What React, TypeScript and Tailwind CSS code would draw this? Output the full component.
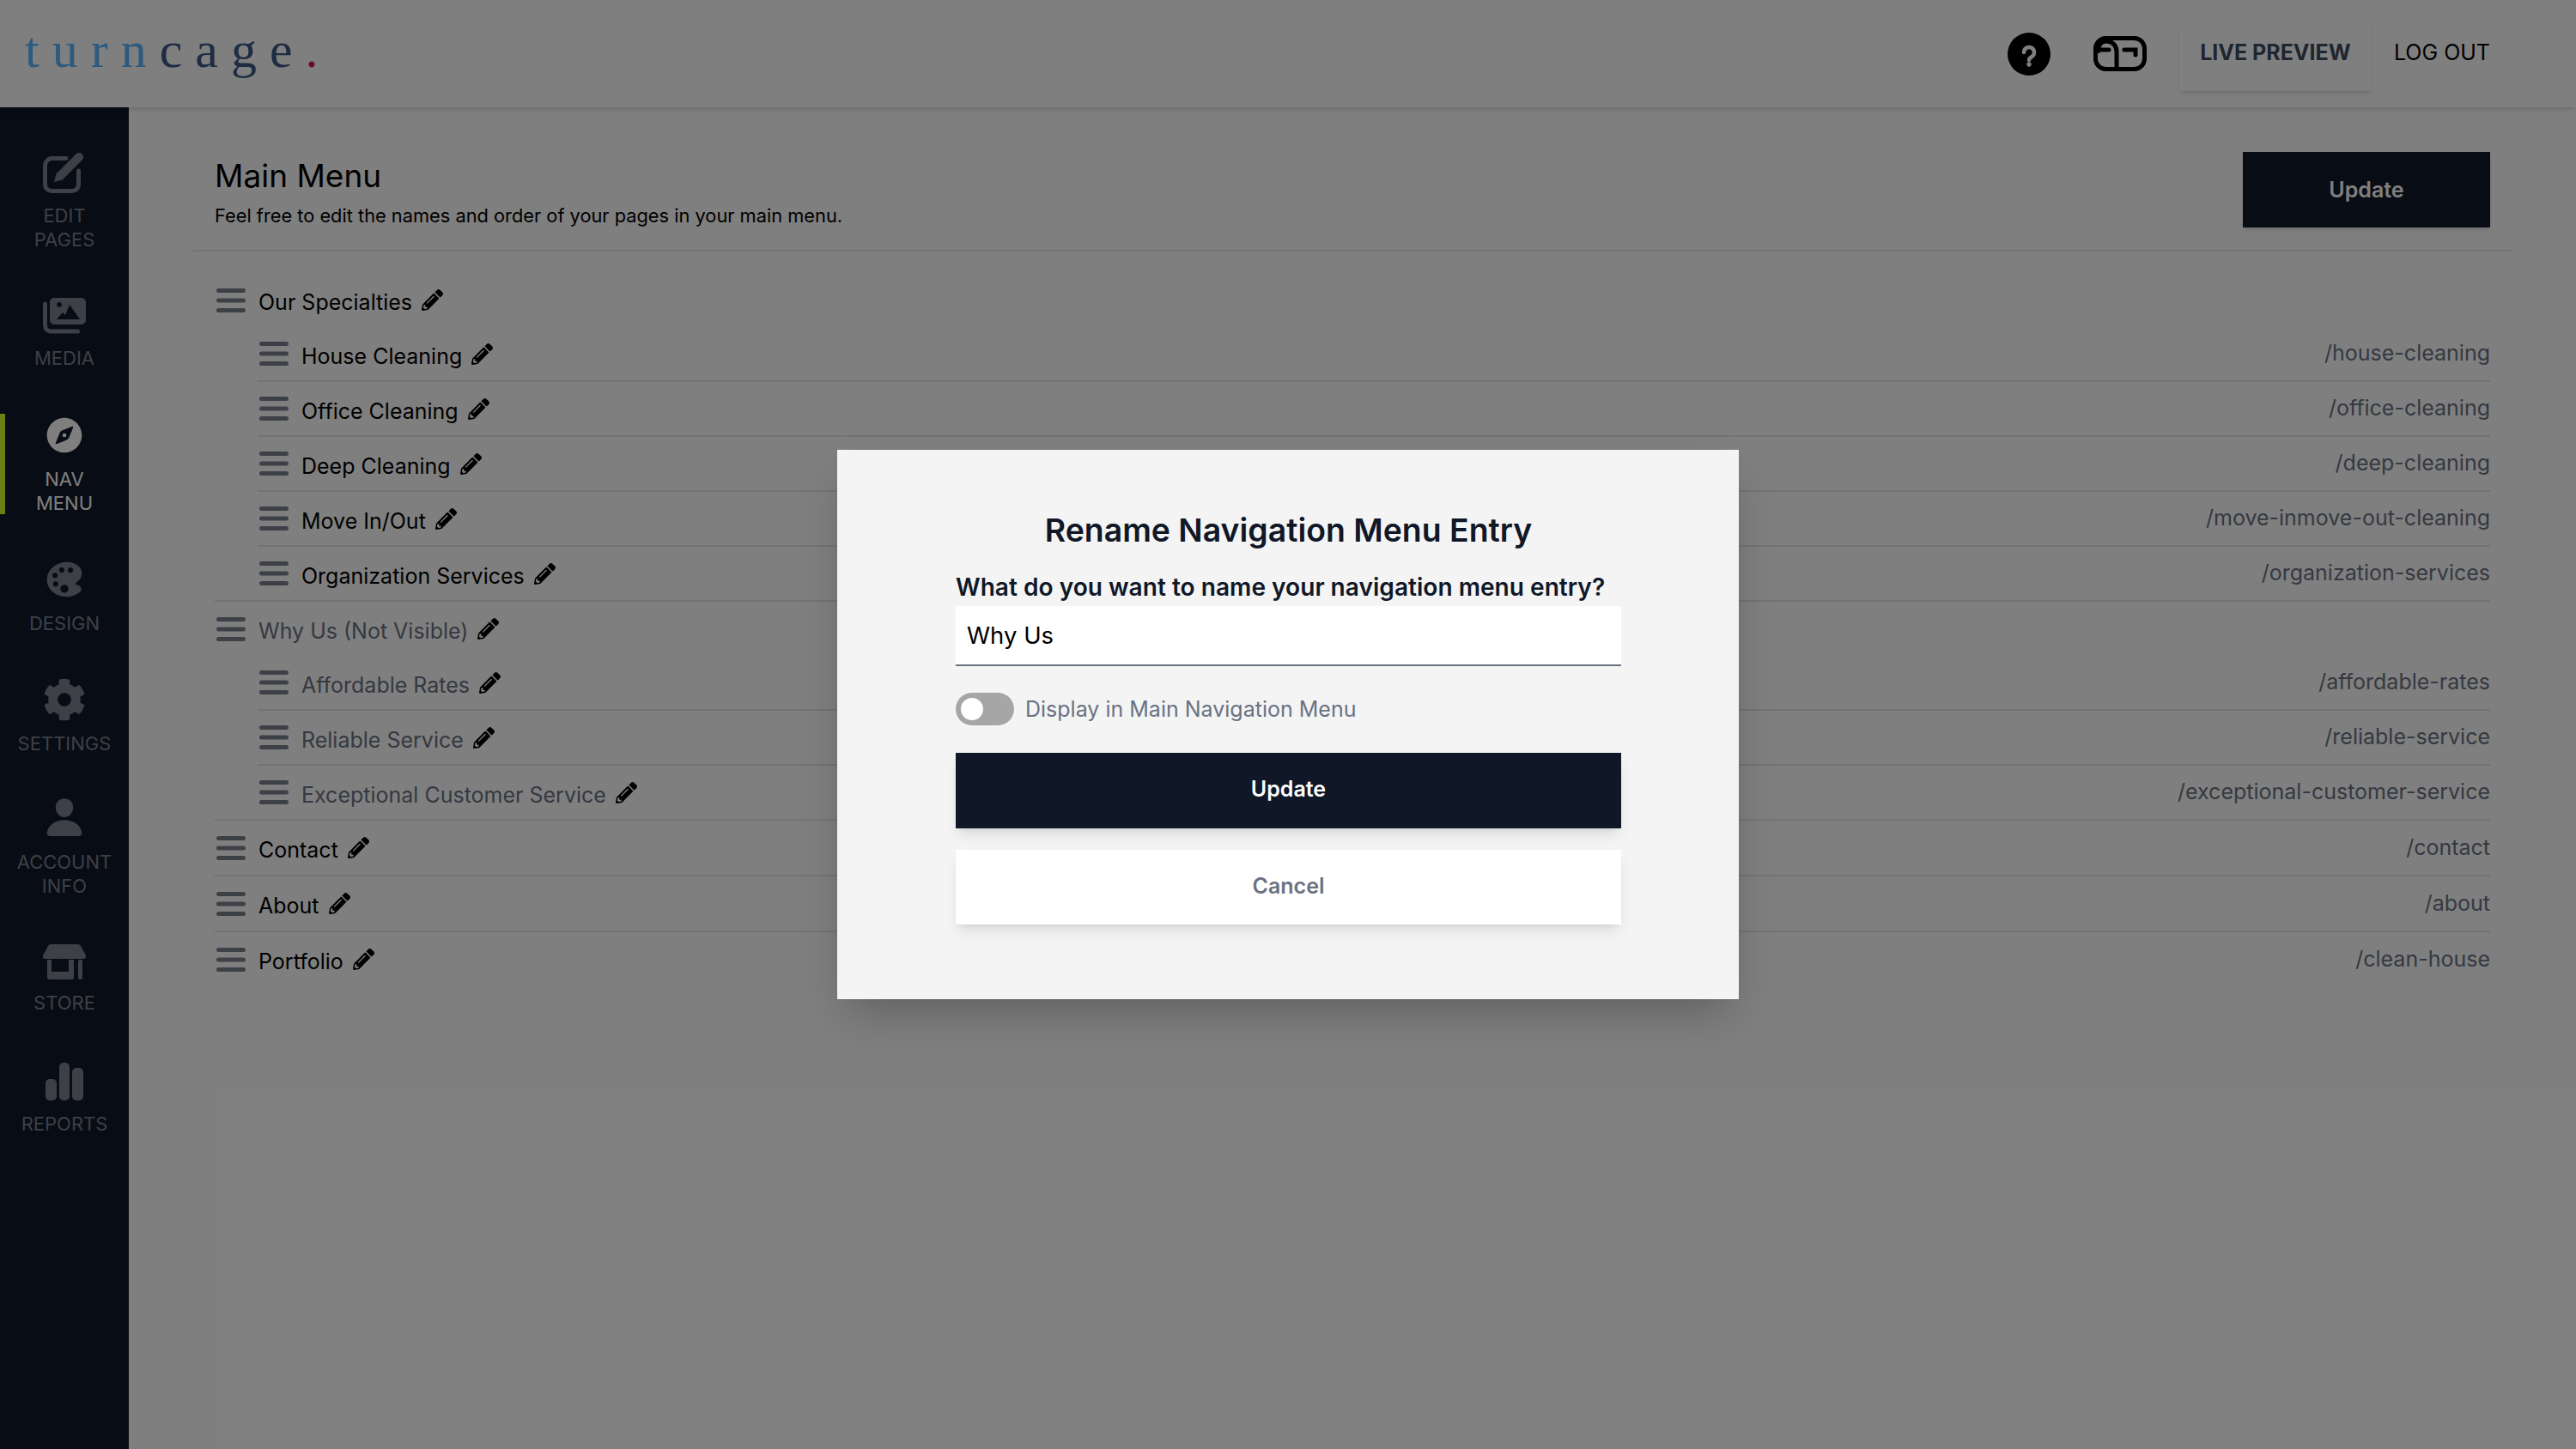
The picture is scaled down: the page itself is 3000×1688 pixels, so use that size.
import type { ReactNode } from "react"
import { FaCog, FaPencilAlt } from "react-icons/fa"
import { IoColorPalette, IoCompass, IoPerson } from "react-icons/io5"

function EditIcon() {
  return (
    <svg width="50" height="50" viewBox="0 0 50 50" fill="none">
      <path d="M27 9.5H11A8.5 8.5 0 0 0 2.5 18v22a7.5 7.5 0 0 0 7.5 7.5h24a7.5 7.5 0 0 0 7.5-7.5V24" stroke="currentColor" strokeWidth="5" strokeLinecap="round" />
      <path d="M21 29L42 8" stroke="currentColor" strokeWidth="10" strokeLinecap="round" />
      <path d="M13 37l3-11 8 8z" fill="currentColor" />
    </svg>
  )
}

function MediaIcon() {
  return (
    <svg width="50" height="50" viewBox="0 0 50 50" fill="none">
      <path d="M2.5 13v25a7 7 0 0 0 7 7h31" stroke="currentColor" strokeWidth="5" strokeLinecap="round" />
      <path
        fillRule="evenodd"
        d="M13 6h32a5 5 0 0 1 5 5v21a5 5 0 0 1-5 5H13a5 5 0 0 1-5-5V11a5 5 0 0 1 5-5zM16 31l7-8 3 3 5-12 12 17zM19 11a3 3 0 1 0 .01 0z"
        fill="currentColor"
      />
    </svg>
  )
}

function StoreIcon() {
  return (
    <svg width="50" height="50" viewBox="0 0 50 50" fill="currentColor">
      <path d="M9 4h32q2 0 3 2l6 11q1 4-3 4H3q-4 0-3-4L6 6q1-2 3-2z" />
      <path d="M5 22h5v14h20V22h6v21q0 2-2 2H7q-2 0-2-2z" />
      <rect x="41" y="22" width="5" height="23" rx="2" />
    </svg>
  )
}

function ReportsIcon() {
  return (
    <svg width="50" height="50" viewBox="0 0 50 50" fill="currentColor">
      <rect x="3" y="21" width="13" height="25" rx="5" />
      <rect x="19" y="2" width="12" height="44" rx="5" />
      <rect x="34" y="8" width="13" height="38" rx="5" />
    </svg>
  )
}

const navItems: { label: string[]; icon: ReactNode; active?: boolean; itemClass?: string; labelClass?: string }[] = [
  { label: ["EDIT", "PAGES"], icon: <EditIcon />, itemClass: "mb-[-2px]" },
  { label: ["MEDIA"], icon: <MediaIcon />, itemClass: "mb-[1px]" },
  { label: ["NAV", "MENU"], icon: <IoCompass size={62} />, active: true },
  { label: ["DESIGN"], icon: <IoColorPalette size={62} /> },
  { label: ["SETTINGS"], icon: <FaCog size={50} />, itemClass: "mb-[-3px]" },
  { label: ["ACCOUNT", "INFO"], icon: <IoPerson size={60} />, labelClass: "mt-[1px]" },
  { label: ["STORE"], icon: <StoreIcon />, labelClass: "-mt-[4px]" },
  { label: ["REPORTS"], icon: <ReportsIcon />, itemClass: "mt-[4px]", labelClass: "-mt-[3px]" },
]

type Row = { name: string; path?: string; muted?: boolean }
type Group = Row & { children?: Row[] }

const groups: Group[] = [
  {
    name: "Our Specialties",
    children: [
      { name: "House Cleaning", path: "/house-cleaning" },
      { name: "Office Cleaning", path: "/office-cleaning" },
      { name: "Deep Cleaning", path: "/deep-cleaning" },
      { name: "Move In/Out", path: "/move-inmove-out-cleaning" },
      { name: "Organization Services", path: "/organization-services" },
    ],
  },
  {
    name: "Why Us (Not Visible)",
    muted: true,
    children: [
      { name: "Affordable Rates", path: "/affordable-rates", muted: true },
      { name: "Reliable Service", path: "/reliable-service", muted: true },
      { name: "Exceptional Customer Service", path: "/exceptional-customer-service", muted: true },
    ],
  },
  { name: "Contact", path: "/contact" },
  { name: "About", path: "/about" },
  { name: "Portfolio", path: "/clean-house" },
]

function Hamburger() {
  return (
    <svg width="34" height="28" viewBox="0 0 34 28" className="shrink-0 text-[#7b818e]">
      <path d="M2.5 2.5h29M2.5 14h29M2.5 25.5h29" stroke="currentColor" strokeWidth="5" strokeLinecap="round" />
    </svg>
  )
}

function MenuRow({ row, top }: { row: Row; top?: boolean }) {
  return (
    <div className={`flex items-center justify-between pl-[2px] ${top ? "h-[63px]" : "h-[62px]"}`}>
      <div className="flex items-center">
        <Hamburger />
        <span className={`ml-[15px] pt-[7px] text-[25px] ${row.muted ? "text-gray-500" : "text-black"}`}>{row.name}</span>
        <FaPencilAlt size={25} className="ml-[11px] text-black" />
      </div>
      {row.path && <span className="text-[25px] text-gray-500">{row.path}</span>}
    </div>
  )
}

export default function App() {
  return (
    <div className="relative flex h-[1688px] w-[3000px] flex-col overflow-hidden bg-white font-['Inter',sans-serif]">
      <header className="z-10 flex h-[125px] shrink-0 items-center justify-between bg-white pl-[29px] pr-[100px] shadow-md">
        <div className="mb-[10px] font-['Liberation_Serif',serif] text-[60px] leading-none tracking-[15px]">
          <span className="text-[#5ab4ff]">turn</span>
          <span className="text-[#3e5a88]">cage</span>
          <span className="text-[#d4145a]">.</span>
        </div>
        <div className="flex items-start self-start pt-[25px]">
          <svg width="50" height="50" viewBox="0 0 50 50" fill="none" className="mt-[13px]">
            <circle cx="25" cy="25" r="25" fill="#000" />
            <path d="M19 23a6 6 0 1 1 9 5.2c-2 1.2-3 1.8-3 3.8" stroke="#fff" strokeWidth="4.5" strokeLinecap="round" />
            <circle cx="25" cy="37" r="2.7" fill="#fff" />
          </svg>
          <svg width="62" height="41" viewBox="0 0 62 41" fill="none" className="ml-[50px] mt-[17px] text-black">
            <rect x="2.5" y="2.5" width="57" height="36" rx="12" stroke="currentColor" strokeWidth="5" />
            <path d="M5 20C5 12 8 6 15 6C22 6 27 11 27 18V38" stroke="currentColor" strokeWidth="5" />
            <path d="M9 16h9M36 16h13v6" stroke="currentColor" strokeWidth="5" strokeLinecap="round" />
          </svg>
          <div className="ml-[38px] flex h-[81px] w-[224px] items-center justify-center bg-white pb-[8px] text-[25px] font-bold text-[#3e4c60] shadow-md">
            LIVE PREVIEW
          </div>
          <div className="ml-[26px] flex h-[81px] items-center pb-[8px] text-[25px] text-black">LOG OUT</div>
        </div>
      </header>

      <div className="flex flex-1">
        <aside className="flex w-[150px] shrink-0 flex-col gap-[50px] bg-gray-900 pt-[50px]">
          {navItems.map((item) => (
            <div key={item.label[0]} className={`relative flex flex-col items-center gap-[12px] ${item.itemClass ?? ""}`}>
              {item.active && <div className="absolute left-0 top-0 h-[117px] w-[6px] bg-[#d6ff26]" />}
              <div className={`flex h-[50px] w-[50px] items-center justify-center ${item.active ? "text-white" : "text-[#7b818e]"}`}>{item.icon}</div>
              <div className={`text-center text-[22px] leading-[28px] ${item.active ? "text-white" : "text-[#7b818e]"} ${item.labelClass ?? ""}`}>
                {item.label.map((line) => (
                  <div key={line}>{line}</div>
                ))}
              </div>
            </div>
          ))}
        </aside>

        <main className="flex-1 px-[75px]">
          <div className="flex h-[168px] items-start justify-between border-b-2 border-gray-200 px-[25px] pt-[52px]">
            <div>
              <h1 className="mt-[5px] text-[37px] leading-[46px] text-black">Main Menu</h1>
              <p className="mt-[9px] text-[21.8px] leading-[28px] text-black">Feel free to edit the names and order of your pages in your main menu.</p>
            </div>
            <button className="flex h-[88px] w-[288px] items-center justify-center bg-gray-900 pt-[1px] text-[25px] font-semibold text-white shadow-md">Update</button>
          </div>
          <div className="px-[25px] pt-[25px]">
            {groups.map((group, i) => (
              <div key={group.name} className={i < groups.length - 1 ? "border-b-2 border-gray-200" : ""}>
                <MenuRow row={group} top />
                {group.children && (
                  <div className="pl-[50px]">
                    {group.children.map((child, j) => (
                      <div key={child.name} className={j < group.children!.length - 1 ? "border-b-2 border-gray-200" : ""}>
                        <MenuRow row={child} />
                      </div>
                    ))}
                  </div>
                )}
              </div>
            ))}
          </div>
        </main>
      </div>

      {/* modal */}
      <div className="absolute inset-0 z-20 flex items-center justify-center bg-black/50">
        <div className="h-[640px] w-[1050px] bg-[#f4f4f4] pl-[138px] pr-[137px] pt-[71px] shadow-2xl">
          <h2 className="text-center text-[37.4px] font-semibold leading-[46px] text-gray-900">Rename Navigation Menu Entry</h2>
          <label className="mt-[26px] block text-[28.1px] font-semibold leading-[34px] text-gray-900">What do you want to name your navigation menu entry?</label>
          <div className="mt-[5px] flex h-[70px] items-center border-b-2 border-gray-500 bg-white px-[13px] pt-[1px] text-[27.5px] text-black">Why Us</div>
          <div className="mt-[31px] flex items-center gap-[13px]">
            <div className="flex h-[38px] w-[68px] items-center rounded-full bg-[#a6a6a6] pl-[6px]">
              <div className="h-[26px] w-[26px] rounded-full bg-white" />
            </div>
            <span className="pt-[1px] text-[25px] text-gray-500">Display in Main Navigation Menu</span>
          </div>
          <button className="mt-[31px] flex h-[88px] w-full items-center justify-center bg-gray-900 pb-[1px] text-[25px] font-semibold text-white shadow-lg">Update</button>
          <button className="mt-[25px] flex h-[87px] w-full items-center justify-center bg-white text-[25px] font-semibold text-gray-500 shadow-lg">Cancel</button>
        </div>
      </div>
    </div>
  )
}
